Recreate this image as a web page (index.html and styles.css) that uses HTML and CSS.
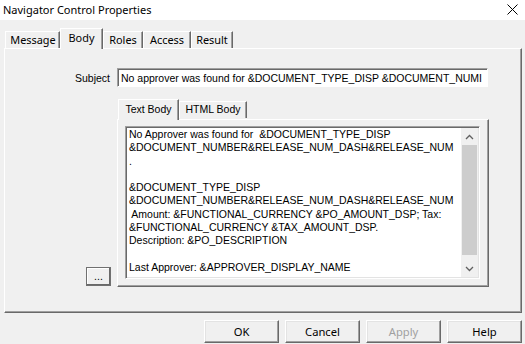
FILE: index.html
```html
<!DOCTYPE html>
<html>
<head>
<meta charset="utf-8">
<link rel="stylesheet" href="styles.css">
</head>
<body>
<div class="window">
  <div class="titlebar">
    <span class="title">Navigator Control Properties</span>
    <svg class="close" width="11" height="11" viewBox="0 0 11 11"><path d="M0.5 0.5 L10.5 10.5 M10.5 0.5 L0.5 10.5" stroke="#000" stroke-width="1" fill="none"/></svg>
  </div>
  <div class="body">
    <div class="tabs">
      <div class="tab w-message">Message</div>
      <div class="tab active w-body">Body</div>
      <div class="tab w-roles">Roles</div>
      <div class="tab w-access">Access</div>
      <div class="tab w-result">Result</div>
    </div>
    <div class="panel">
      <div class="grid">
        <label class="label">Subject</label>
        <div class="input">No approver was found for &amp;DOCUMENT_TYPE_DISP &amp;DOCUMENT_NUMI</div>
        <div class="dots-cell"><div class="btn dots">...</div></div>
        <div class="subtabctl">
          <div class="subtabs">
            <div class="subtab active w-text">Text Body</div>
            <div class="subtab w-html">HTML Body</div>
          </div>
          <div class="subpanel">
            <div class="textarea">
              <div class="text">No Approver was found for  &amp;DOCUMENT_TYPE_DISP
&amp;DOCUMENT_NUMBER&amp;RELEASE_NUM_DASH&amp;RELEASE_NUM
.

&amp;DOCUMENT_TYPE_DISP
&amp;DOCUMENT_NUMBER&amp;RELEASE_NUM_DASH&amp;RELEASE_NUM
 Amount: &amp;FUNCTIONAL_CURRENCY &amp;PO_AMOUNT_DSP; Tax:
&amp;FUNCTIONAL_CURRENCY &amp;TAX_AMOUNT_DSP.
Description: &amp;PO_DESCRIPTION

Last Approver: &amp;APPROVER_DISPLAY_NAME</div>
              <div class="scrollbar">
                <div class="arrow"><svg width="9" height="6" viewBox="0 0 9 6"><path d="M1 5 L4.5 1.5 L8 5" stroke="#606060" stroke-width="1.3" fill="none"/></svg></div>
                <div class="track"><div class="thumb"></div></div>
                <div class="arrow"><svg width="9" height="6" viewBox="0 0 9 6"><path d="M1 1 L4.5 4.5 L8 1" stroke="#606060" stroke-width="1.3" fill="none"/></svg></div>
              </div>
            </div>
          </div>
        </div>
      </div>
    </div>
    <div class="footer">
      <div class="btn big">OK</div>
      <div class="btn big">Cancel</div>
      <div class="btn big disabled">Apply</div>
      <div class="btn big">Help</div>
    </div>
  </div>
</div>
</body>
</html>
```
FILE: styles.css
```css
* { box-sizing: border-box; }
html, body { margin: 0; padding: 0; }
body {
  width: 525px;
  height: 344px;
  overflow: hidden;
  background: #f0f0f0;
  font-family: "Noto Sans", "Liberation Sans", sans-serif;
  color: #000;
}
.window { width: 525px; height: 344px; display: flex; flex-direction: column; }
.titlebar {
  height: 20px;
  background: #fff;
  display: flex;
  align-items: center;
  justify-content: space-between;
  padding: 0 7px 2px 3px;
}
.title { font-size: 11px; }
.close { display: block; margin-top: 1px; }
.body { flex: 1; display: flex; flex-direction: column; padding: 0 3px 0 4px; }
.tabs {
  display: flex;
  align-items: flex-end;
  height: 28px;
  padding-left: 1px;
  position: relative;
  z-index: 2;
}
.tab {
  font-size: 10.9px;
  height: 17px;
  line-height: 16px;
  text-align: center;
  border-top: 1px solid #fff;
  border-left: 1px solid #fff;
  border-right: 1px solid #696969;
  box-shadow: inset -1px 0 0 #a0a0a0;
}
.w-message { width: 55px; padding-left: 1px; }
.w-body { width: 43px; }
.w-roles { width: 40px; }
.w-access { width: 48px; }
.w-result { width: 42px; }
.tab.active {
  height: 21px;
  margin-bottom: -1px;
  line-height: 17px;
  background: #f0f0f0;
  position: relative;
  z-index: 3;
}
.panel {
  height: 265px;
  border-top: 1px solid #fff;
  border-left: 1px solid #fff;
  border-right: 1px solid #696969;
  border-bottom: 1px solid #696969;
  box-shadow: inset -1px -1px 0 #a0a0a0;
  padding: 19px 0 0 0;
}
.grid {
  display: grid;
  grid-template-columns: 106px 372px;
  column-gap: 6px;
  row-gap: 11px;
  font-family: "Liberation Sans", Arial, sans-serif;
  font-size: 10.5px;
}
.label { align-self: center; text-align: right; padding-right: 1px; }
.input {
  width: 371px;
  height: 19px;
  background: #fff;
  border-top: 1px solid #a0a0a0;
  border-left: 1px solid #a0a0a0;
  border-right: 1px solid #fff;
  border-bottom: 1px solid #fff;
  box-shadow: inset 1px 1px 0 #696969;
  white-space: nowrap;
  overflow: hidden;
  padding: 2px 0 0 3px;
  line-height: 14px;
}
.dots-cell { display: flex; justify-content: flex-end; align-items: flex-end; padding-bottom: 1px; }
.btn {
  background: #f0f0f0;
  border-top: 1px solid #fff;
  border-left: 1px solid #fff;
  border-right: 1px solid #696969;
  border-bottom: 1px solid #696969;
  box-shadow: inset -1px -1px 0 #a0a0a0, inset 1px 1px 0 #e3e3e3;
  display: flex;
  align-items: center;
  justify-content: center;
}
.dots { width: 25px; height: 19px; font-size: 10.5px; padding-bottom: 2px; border: 1px solid #707070; box-shadow: inset -1px -1px 0 #696969, inset 1px 1px 0 #fff; }
.subtabctl { display: flex; flex-direction: column; width: 372px; }
.subtabs { display: flex; align-items: flex-end; height: 21px; position: relative; z-index: 2; padding-left: 1px; }
.subtab {
  font-size: 10.5px;
  font-family: "Liberation Sans", Arial, sans-serif;
  height: 17px;
  line-height: 15px;
  text-align: center;
  border-top: 1px solid #fff;
  border-left: 1px solid #fff;
  border-right: 1px solid #696969;
  box-shadow: inset -1px 0 0 #a0a0a0;
  margin-bottom: 1px;
}
.w-text { width: 61px; }
.w-html { width: 68px; }
.subtab.active {
  height: 21px;
  margin: 0 0 -1px 0;
  line-height: 18px;
  background: #f0f0f0;
}
.subpanel {
  height: 168px;
  border-top: 1px solid #fff;
  border-left: 1px solid #fff;
  border-right: 1px solid #696969;
  border-bottom: 1px solid #696969;
  box-shadow: inset -1px -1px 0 #a0a0a0;
  padding: 6px 0 0 7px;
}
.textarea {
  width: 355px;
  height: 153px;
  background: #fff;
  border-top: 1px solid #a0a0a0;
  border-left: 1px solid #a0a0a0;
  border-right: 1px solid #fff;
  border-bottom: 1px solid #fff;
  box-shadow: inset 1px 1px 0 #696969, inset -1px -1px 0 #e3e3e3;
  display: flex;
  overflow: hidden;
}
.text {
  flex: 1;
  white-space: pre;
  overflow: hidden;
  line-height: 13.3px;
  padding: 1px 0 0 3px;
}
.scrollbar {
  width: 17px;
  display: flex;
  flex-direction: column;
  background: #f0f0f0;
  margin: 1px 1px 1px 0;
}
.arrow { height: 17px; display: flex; align-items: center; justify-content: center; }
.track { flex: 1; padding: 0 1px; }
.thumb { height: 110px; background: #cdcdcd; }
.footer {
  display: flex;
  justify-content: flex-end;
  gap: 6px;
  padding-top: 7px;
}
.big { width: 75px; height: 23px; font-size: 11.2px; font-family: "Noto Sans", "Liberation Sans", sans-serif; padding-bottom: 1px; }
.disabled { color: #a0a0a0; }
```
